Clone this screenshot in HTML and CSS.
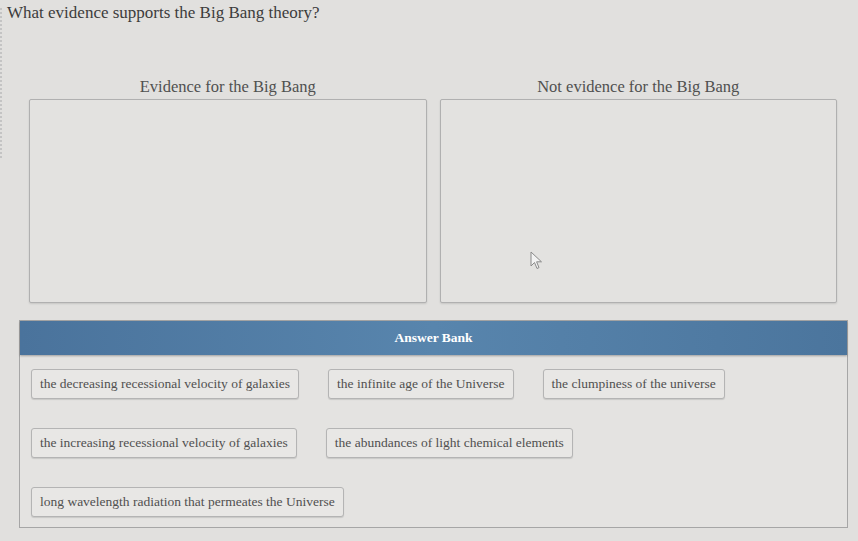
FILE: index.html
```html
<!DOCTYPE html>
<html lang="en">
<head>
<meta charset="UTF-8">
<meta name="viewport" content="width=device-width, initial-scale=1.0">
<title>Big Bang Evidence</title>
<link rel="stylesheet" href="styles.css">
</head>
<body>

<div class="page">
    <div class="question">What evidence supports the Big Bang theory?</div>

    <!-- Drop zones -->
    <div class="zones">
        <div class="zone">
            <div class="zone-label">Evidence for the Big Bang</div>
            <div class="zone-box"></div>
        </div>
        <div class="zone zone-right">
            <div class="zone-label">Not evidence for the Big Bang</div>
            <div class="zone-box"></div>
        </div>
    </div>

    <!-- Answer bank -->
    <div class="bank">
        <div class="bank-header">Answer Bank</div>
        <div class="bank-body">
            <div class="bank-row">
                <div class="chip">the decreasing recessional velocity of galaxies</div>
                <div class="chip">the infinite age of the Universe</div>
                <div class="chip">the clumpiness of the universe</div>
            </div>
            <div class="bank-row">
                <div class="chip">the increasing recessional velocity of galaxies</div>
                <div class="chip">the abundances of light chemical elements</div>
            </div>
            <div class="bank-row">
                <div class="chip">long wavelength radiation that permeates the Universe</div>
            </div>
        </div>
    </div>

    <!-- mouse pointer -->
    <svg class="pointer" width="14" height="20" viewBox="0 0 14 20">
        <path d="M1 1 L1 15 L4.5 11.5 L7 17.5 L9 16.6 L6.6 10.8 L11.5 10.8 Z" fill="#f2f2f2" stroke="#8a8a8a" stroke-width="1"/>
    </svg>
</div>

</body>
</html>
```

FILE: styles.css
```css
body {
    margin: 0;
    padding: 0;
    background-color: #e1e0de;
    font-family: "Liberation Serif", "Times New Roman", serif;
    color: #4a4a4a;
}
.page {
    position: relative;
    width: 858px;
    height: 541px;
    overflow: hidden;
}
/* faint dotted frame edge on the left */
.page::before {
    content: "";
    position: absolute;
    left: 0;
    top: 8px;
    width: 0;
    height: 150px;
    border-left: 2px dotted #c4c4c4;
}
.question {
    padding: 3px 0 0 7px;
    font-size: 17px;
    color: #3c3c3c;
}
.zones {
    display: flex;
    gap: 13px;
    padding: 0 21px 0 29px;
    margin-top: 54px;
}
.zone {
    flex: 1;
    display: flex;
    flex-direction: column;
}
.zone-label {
    text-align: center;
    font-size: 16.5px;
    color: #505050;
    height: 22px;
}
.zone-box {
    height: 202px;
    border: 1px solid #b0b0b0;
    border-radius: 2px;
    background-color: #e3e2e0;
    box-shadow: 0 1px 2px rgba(0, 0, 0, 0.12);
}
.bank {
    margin: 17px 10px 0 19px;
    border: 1px solid #a6a6a6;
    background-color: #e4e3e1;
    height: 206px;
}
.bank-header {
    height: 34px;
    line-height: 34px;
    text-align: center;
    color: #fff;
    font-size: 13.5px;
    font-weight: bold;
    background: linear-gradient(to right, #4a739c, #5885ad 50%, #4b759d);
    box-shadow: 0 1px 2px rgba(0, 0, 0, 0.3);
}
.bank-body {
    padding: 14px 10px 0 11px;
    display: flex;
    flex-direction: column;
    gap: 29px;
}
.bank-row {
    display: flex;
    gap: 29px;
}
.chip {
    height: 28px;
    line-height: 28px;
    padding: 0 8px;
    font-size: 13.5px;
    color: #505050;
    border: 1px solid #b4b4b4;
    border-radius: 3px;
    background-color: #e8e7e5;
    box-shadow: 0 1px 1px rgba(0, 0, 0, 0.12);
    white-space: nowrap;
}
.pointer {
    position: absolute;
    left: 530px;
    top: 251px;
}
```
